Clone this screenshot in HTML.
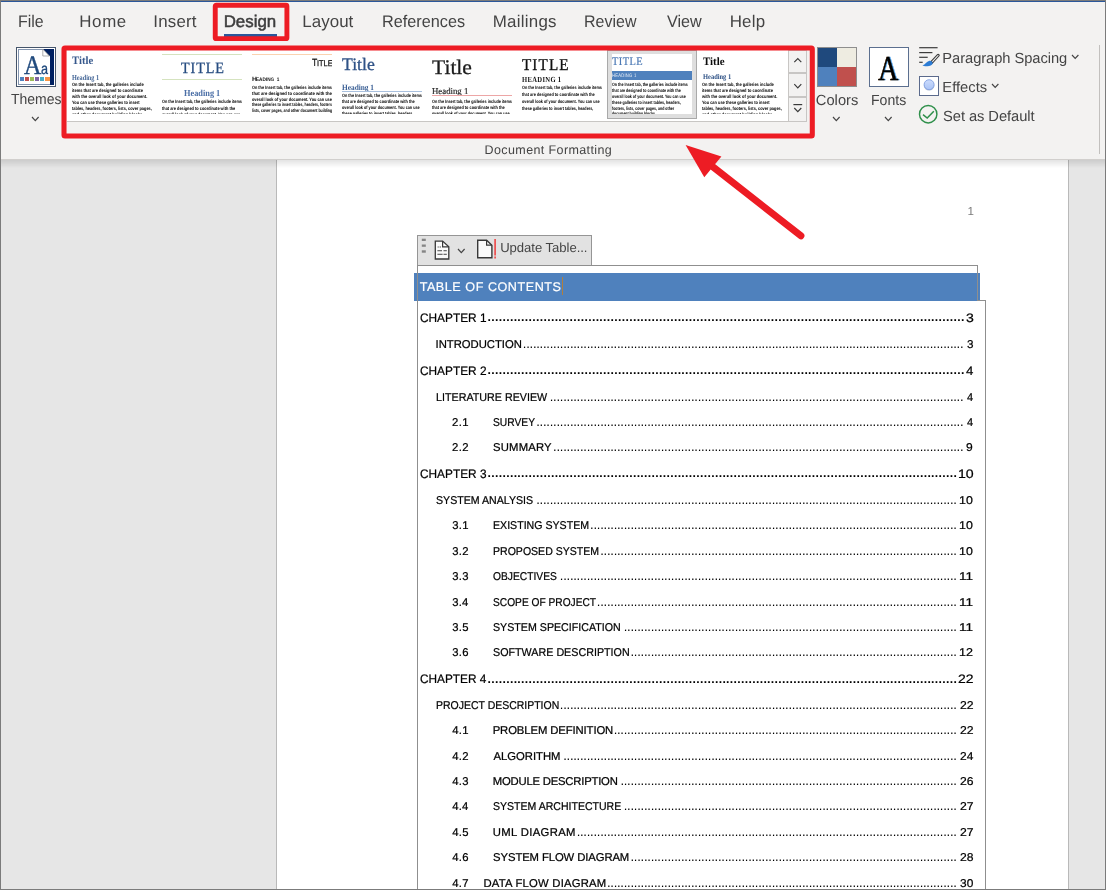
<!DOCTYPE html>
<html><head><meta charset="utf-8"><title>Word - Design tab</title>
<style>
html,body{margin:0;padding:0}
body{width:1106px;height:890px;overflow:hidden;background:#e6e6e6;position:relative;font-family:"Liberation Sans",sans-serif}
.a{position:absolute}
.t{position:absolute;white-space:nowrap;transform-origin:0 50%;text-rendering:geometricPrecision}
.s{font-family:'Liberation Sans',sans-serif}
.ribbon{left:0;top:0;width:1106px;height:159px;background:#f3f2f1}
.redbox{border:5px solid #ed1c24;border-radius:4px;box-sizing:border-box}
.gal{left:67px;top:50px;width:721px;height:71px;background:#fff;overflow:hidden}
.thumb{position:absolute;top:0;height:64px;overflow:hidden}
.sb{position:absolute;left:788px;width:19px;box-sizing:border-box;border:1px solid #c8c6c4;background:#f3f2f1}
svg{position:absolute;overflow:visible}
</style></head><body><div id="root" style="position:absolute;left:0;top:0;width:1106px;height:890px;overflow:hidden;will-change:transform">
<div class="a ribbon"></div><div class="a" style="left:0;top:159px;width:1106px;height:1px;background:#d1cfcd"></div><div class="a" style="left:276px;top:160px;width:793px;height:730px;background:#fff;border-left:1px solid #b9b9b9;border-right:1px solid #b9b9b9;box-sizing:border-box"></div><div class="a" style="left:0;top:160px;width:1106px;height:8px;background:linear-gradient(rgba(0,0,0,.11),rgba(0,0,0,0))"></div><span class="t" style="left:18.35px;top:13.60px;font:400 16.9px/16.9px 'Liberation Sans',sans-serif;color:#444;transform:scaleX(0.9435);">File</span><span class="t" style="left:79.28px;top:13.60px;font:400 16.9px/16.9px 'Liberation Sans',sans-serif;color:#444;letter-spacing:0.642px;">Home</span><span class="t" style="left:153.28px;top:13.60px;font:400 16.9px/16.9px 'Liberation Sans',sans-serif;color:#444;letter-spacing:0.199px;">Insert</span><span class="t" style="left:223.68px;top:13.80px;font:400 16.9px/16.9px 'Liberation Sans',sans-serif;color:#3d3d3d;letter-spacing:-0.007px;-webkit-text-stroke:.5px #3d3d3d;">Design</span><span class="t" style="left:302.28px;top:13.60px;font:400 16.9px/16.9px 'Liberation Sans',sans-serif;color:#444;letter-spacing:0.064px;">Layout</span><span class="t" style="left:382.33px;top:13.60px;font:400 16.9px/16.9px 'Liberation Sans',sans-serif;color:#444;transform:scaleX(0.9625);">References</span><span class="t" style="left:492.68px;top:13.60px;font:400 16.9px/16.9px 'Liberation Sans',sans-serif;color:#444;letter-spacing:0.266px;">Mailings</span><span class="t" style="left:584.35px;top:13.60px;font:400 16.9px/16.9px 'Liberation Sans',sans-serif;color:#444;transform:scaleX(0.9466);">Review</span><span class="t" style="left:667.00px;top:13.60px;font:400 16.9px/16.9px 'Liberation Sans',sans-serif;color:#444;transform:scaleX(0.9581);">View</span><span class="t" style="left:729.68px;top:13.60px;font:400 16.9px/16.9px 'Liberation Sans',sans-serif;color:#444;letter-spacing:0.216px;">Help</span><div class="a" style="left:224px;top:34px;width:53px;height:3px;background:#2b579a"></div><svg style="left:0;top:0" width="300" height="50"><rect x="215.25" y="5.25" width="71.65" height="33.4" rx="1" fill="none" stroke="#ed1c24" stroke-width="4.9"/></svg><div class="a" style="left:16px;top:47px;width:40px;height:40px;box-sizing:border-box;border:1px solid #44546a;background:#fff"></div>
<div class="a" style="left:18px;top:49px;width:36px;height:36px;box-sizing:border-box;border:1px solid #8496b0;background:#fff"></div>
<div class="a" style="left:43px;top:49px;width:11px;height:7px;background:#002060"></div>
<div class="a" style="left:49.5px;top:49px;width:4.5px;height:35.5px;background:#002060"></div>
<svg style="left:42px;top:48px" width="9" height="9"><path d="M0.8 1 L0.8 8 L7.5 8 Z" fill="#fff" stroke="#8c8c8c" stroke-width="0.7"/></svg>
<span class="t" style="left:24.00px;top:51.70px;font:400 27px/27px 'Liberation Serif',serif;color:#1f497d;transform:scaleX(0.8915);-webkit-text-stroke:.4px #1f497d;">A</span><span class="t" style="left:41.21px;top:61.70px;font:400 15.6px/15.6px 'Liberation Sans',sans-serif;color:#1f497d;transform:scaleX(0.8084);-webkit-text-stroke:.3px #1f497d;">a</span><div class="a" style="left:20.1px;top:77.3px;width:3.8px;height:3.5px;background:#4f81bd"></div><div class="a" style="left:25.1px;top:77.3px;width:3.8px;height:3.5px;background:#c0504d"></div><div class="a" style="left:30.1px;top:77.3px;width:3.8px;height:3.5px;background:#9bbb59"></div><div class="a" style="left:35.1px;top:77.3px;width:3.8px;height:3.5px;background:#8064a2"></div><div class="a" style="left:40.1px;top:77.3px;width:3.8px;height:3.5px;background:#4bacc6"></div><div class="a" style="left:45.1px;top:77.3px;width:4.5px;height:3.5px;background:#f79646"></div><div class="a" style="left:49.5px;top:57px;width:4.5px;height:27.5px;background:#002060"></div><span class="t" style="left:10.68px;top:93.30px;font:400 14.7px/14.7px 'Liberation Sans',sans-serif;color:#444;transform:scaleX(0.9502);">Themes</span><svg style="left:31.35px;top:115.70px" width="8.6" height="5.6"><path d="M1 1 L4.30 4.60 L7.6 1" fill="none" stroke="#444" stroke-width="1.15"/></svg><div class="a gal" id="gal"><div class="a" style="left:540.25px;top:-0.5px;width:89.7px;height:69.5px;box-sizing:border-box;border:1px solid #a9a9a9;background:#dedede"></div><div class="a" style="left:5.10px;top:3.75px;width:80.4px;height:60.5px;overflow:hidden;background:#fff"><span class="t" style="left:0.01px;top:2.65px;font:700 11.3px/11.3px 'Liberation Serif',serif;color:#36588c;transform:scaleX(0.9443);">Title</span><span class="t" style="left:0.07px;top:20.25px;font:700 7.6px/7.6px 'Liberation Serif',serif;color:#456798;transform:scaleX(0.8180);">Heading 1</span><span class="t" style="left:0.02px;top:28.85px;font:700 4.7px/4.7px 'Liberation Sans',sans-serif;color:#000;transform:scaleX(0.8442);">On the Insert tab, the galleries include</span><span class="t" style="left:-0.11px;top:34.85px;font:700 4.7px/4.7px 'Liberation Sans',sans-serif;color:#000;transform:scaleX(0.8508);">items that are designed to coordinate</span><span class="t" style="left:0.19px;top:40.85px;font:700 4.7px/4.7px 'Liberation Sans',sans-serif;color:#000;transform:scaleX(0.8627);">with the overall look of your document.</span><span class="t" style="left:0.11px;top:47.00px;font:700 4.7px/4.7px 'Liberation Sans',sans-serif;color:#000;transform:scaleX(0.8356);">You can use these galleries to insert</span><span class="t" style="left:0.11px;top:53.05px;font:700 4.7px/4.7px 'Liberation Sans',sans-serif;color:#000;transform:scaleX(0.8327);">tables, headers, footers, lists, cover pages,</span><span class="t" style="left:0.06px;top:59.05px;font:700 4.7px/4.7px 'Liberation Sans',sans-serif;color:#000;transform:scaleX(0.8705);">and other document building blocks.</span></div><div class="a" style="left:95.10px;top:3.75px;width:80.4px;height:60.5px;overflow:hidden;background:#fff"><div class="a" style="left:0.00px;top:0.35px;width:80.2px;height:1px;background:#d5e3bf"></div><div class="a" style="left:0.00px;top:25.35px;width:80.2px;height:1px;background:#d5e3bf"></div><span class="t" style="left:18.58px;top:6.75px;font:400 15.8px/15.8px 'Liberation Serif',serif;color:#264c80;transform:scaleX(0.8964);letter-spacing:1px;-webkit-text-stroke:.3px #264c80;">TITLE</span><span class="t" style="left:21.76px;top:35.15px;font:700 9.1px/9.1px 'Liberation Serif',serif;color:#4a6ea6;transform:scaleX(0.9145);">Heading 1</span><span class="t" style="left:0.03px;top:46.65px;font:700 4.7px/4.7px 'Liberation Sans',sans-serif;color:#000;transform:scaleX(0.8124);">On the Insert tab, the galleries include items</span><span class="t" style="left:0.11px;top:53.15px;font:700 4.7px/4.7px 'Liberation Sans',sans-serif;color:#000;transform:scaleX(0.8241);">that are designed to coordinate with the</span><span class="t" style="left:0.03px;top:59.45px;font:700 4.7px/4.7px 'Liberation Sans',sans-serif;color:#000;transform:scaleX(0.8084);">overall look of your document. You can use</span></div><div class="a" style="left:185.10px;top:3.75px;width:80.4px;height:60.5px;overflow:hidden;background:#fff"><div class="a" style="left:0.00px;top:0.35px;width:80.2px;height:1px;background:#fad3b0"></div><span class="t" style="left:59.98px;top:4.75px;font:400 10.4px/10.4px 'Liberation Sans',sans-serif;color:#111;transform:scaleX(0.8319);-webkit-text-stroke:.2px #111;">T</span><span class="t" style="left:64.73px;top:5.75px;font:400 8.2px/8.2px 'Liberation Sans',sans-serif;color:#111;transform:scaleX(0.8986);-webkit-text-stroke:.25px #111;">ITLE</span><span class="t" style="left:-0.23px;top:23.25px;font:700 6.3px/6.3px 'Liberation Sans',sans-serif;color:#111;transform:scaleX(1.0667);">H</span><span class="t" style="left:4.12px;top:24.25px;font:700 5px/5px 'Liberation Sans',sans-serif;color:#111;transform:scaleX(0.9319);white-space:pre;">EADING  1</span><span class="t" style="left:0.03px;top:32.00px;font:700 4.7px/4.7px 'Liberation Sans',sans-serif;color:#000;transform:scaleX(0.8124);">On the Insert tab, the galleries include items</span><span class="t" style="left:0.11px;top:37.85px;font:700 4.7px/4.7px 'Liberation Sans',sans-serif;color:#000;transform:scaleX(0.8995);">that are designed to coordinate with the</span><span class="t" style="left:0.03px;top:43.75px;font:700 4.7px/4.7px 'Liberation Sans',sans-serif;color:#000;transform:scaleX(0.8259);">overall look of your document. You can use</span><span class="t" style="left:0.11px;top:49.55px;font:700 4.7px/4.7px 'Liberation Sans',sans-serif;color:#000;transform:scaleX(0.7517);">these galleries to insert tables, headers, footers</span><span class="t" style="left:-0.08px;top:55.65px;font:700 4.7px/4.7px 'Liberation Sans',sans-serif;color:#000;transform:scaleX(0.7525);">lists, cover pages, and other document building</span></div><div class="a" style="left:275.10px;top:3.75px;width:80.4px;height:60.5px;overflow:hidden;background:#fff"><span class="t" style="left:0.12px;top:2.25px;font:400 17.6px/17.6px 'Liberation Serif',serif;color:#2f5286;transform:scaleX(1.0046);-webkit-text-stroke:.3px #2f5286;">Title</span><span class="t" style="left:0.31px;top:29.85px;font:700 8.1px/8.1px 'Liberation Serif',serif;color:#3a5f95;transform:scaleX(0.9072);">Heading 1</span><div class="a" style="left:0.00px;top:37.25px;width:80.2px;height:1px;background:#a9c0de"></div><span class="t" style="left:0.03px;top:39.75px;font:700 4.7px/4.7px 'Liberation Sans',sans-serif;color:#000;transform:scaleX(0.8124);">On the Insert tab, the galleries include items</span><span class="t" style="left:0.11px;top:45.75px;font:700 4.7px/4.7px 'Liberation Sans',sans-serif;color:#000;transform:scaleX(0.8185);">that are designed to coordinate with the</span><span class="t" style="left:0.03px;top:51.75px;font:700 4.7px/4.7px 'Liberation Sans',sans-serif;color:#000;transform:scaleX(0.8032);">overall look of your document. You can use</span><span class="t" style="left:0.11px;top:57.75px;font:700 4.7px/4.7px 'Liberation Sans',sans-serif;color:#000;transform:scaleX(0.8007);">these galleries to insert tables, headers,</span></div><div class="a" style="left:365.10px;top:3.75px;width:80.4px;height:60.5px;overflow:hidden;background:#fff"><span class="t" style="left:0.06px;top:3.85px;font:400 20.8px/20.8px 'Liberation Serif',serif;color:#1c1c1c;transform:scaleX(1.0355);-webkit-text-stroke:.3px #1c1c1c;">Title</span><span class="t" style="left:0.16px;top:32.85px;font:400 9px/9px 'Liberation Serif',serif;color:#2a2a2a;transform:scaleX(0.9756);-webkit-text-stroke:.2px #2a2a2a;">Heading 1</span><div class="a" style="left:0.00px;top:41.05px;width:80.2px;height:1px;background:#eda6a6"></div><span class="t" style="left:0.03px;top:46.00px;font:700 4.7px/4.7px 'Liberation Sans',sans-serif;color:#000;transform:scaleX(0.8124);">On the Insert tab, the galleries include items</span><span class="t" style="left:0.11px;top:52.25px;font:700 4.7px/4.7px 'Liberation Sans',sans-serif;color:#000;transform:scaleX(0.8185);">that are designed to coordinate with the</span><span class="t" style="left:0.03px;top:58.65px;font:700 4.7px/4.7px 'Liberation Sans',sans-serif;color:#000;transform:scaleX(0.8032);">overall look of your document. You can use</span></div><div class="a" style="left:455.10px;top:3.75px;width:80.4px;height:60.5px;overflow:hidden;background:#fff"><span class="t" style="left:0.16px;top:2.85px;font:400 16.6px/16.6px 'Liberation Serif',serif;color:#111;transform:scaleX(0.9152);letter-spacing:1.2px;-webkit-text-stroke:.3px #111;">TITLE</span><span class="t" style="left:0.32px;top:22.15px;font:700 7.8px/7.8px 'Liberation Serif',serif;color:#111;transform:scaleX(0.8457);letter-spacing:.4px;">HEADING 1</span><span class="t" style="left:0.03px;top:32.00px;font:700 4.7px/4.7px 'Liberation Sans',sans-serif;color:#000;transform:scaleX(0.8124);">On the Insert tab, the galleries include items</span><span class="t" style="left:0.11px;top:38.85px;font:700 4.7px/4.7px 'Liberation Sans',sans-serif;color:#000;transform:scaleX(0.8185);">that are designed to coordinate with the</span><span class="t" style="left:0.03px;top:45.75px;font:700 4.7px/4.7px 'Liberation Sans',sans-serif;color:#000;transform:scaleX(0.8032);">overall look of your document. You can use</span><span class="t" style="left:0.11px;top:52.85px;font:700 4.7px/4.7px 'Liberation Sans',sans-serif;color:#000;transform:scaleX(0.8007);">these galleries to insert tables, headers,</span></div><div class="a" style="left:545.10px;top:3.75px;width:80.4px;height:60.5px;overflow:hidden;background:#fff"><span class="t" style="left:0.22px;top:2.85px;font:400 11.5px/11.5px 'Liberation Serif',serif;color:#4a78b4;transform:scaleX(0.9035);letter-spacing:.5px;-webkit-text-stroke:.2px #4a78b4;">TITLE</span><div class="a" style="left:0.00px;top:17.15px;width:80.2px;height:9px;background:#4f81bd"></div><span class="t" style="left:0.17px;top:20.05px;font:400 5px/5px 'Liberation Sans',sans-serif;color:#e8eef7;transform:scaleX(0.8235);letter-spacing:.3px;">HEADING 1</span><span class="t" style="left:0.03px;top:29.50px;font:700 4.7px/4.7px 'Liberation Sans',sans-serif;color:#000;transform:scaleX(0.7697);">On the Insert tab, the galleries include items</span><span class="t" style="left:0.11px;top:35.15px;font:700 4.7px/4.7px 'Liberation Sans',sans-serif;color:#000;transform:scaleX(0.7735);">that are designed to coordinate with the</span><span class="t" style="left:0.04px;top:41.00px;font:700 4.7px/4.7px 'Liberation Sans',sans-serif;color:#000;transform:scaleX(0.7619);">overall look of your document. You can use</span><span class="t" style="left:0.11px;top:46.85px;font:700 4.7px/4.7px 'Liberation Sans',sans-serif;color:#000;transform:scaleX(0.7726);">these galleries to insert tables, headers,</span><span class="t" style="left:0.11px;top:52.75px;font:700 4.7px/4.7px 'Liberation Sans',sans-serif;color:#000;transform:scaleX(0.7610);">footers, lists, cover pages, and other</span><span class="t" style="left:0.04px;top:58.65px;font:700 4.7px/4.7px 'Liberation Sans',sans-serif;color:#000;transform:scaleX(0.7405);">document building blocks.</span></div><div class="a" style="left:635.10px;top:3.75px;width:80.4px;height:60.5px;overflow:hidden;background:#fff"><span class="t" style="left:0.50px;top:3.15px;font:700 11.3px/11.3px 'Liberation Serif',serif;color:#0c0c0c;transform:scaleX(0.9670);">Title</span><span class="t" style="left:0.56px;top:19.25px;font:700 7.4px/7.4px 'Liberation Serif',serif;color:#2f5286;transform:scaleX(0.8750);">Heading 1</span><span class="t" style="left:0.02px;top:28.85px;font:700 4.7px/4.7px 'Liberation Sans',sans-serif;color:#000;transform:scaleX(0.8453);">On the Insert tab, the galleries include</span><span class="t" style="left:-0.11px;top:34.85px;font:700 4.7px/4.7px 'Liberation Sans',sans-serif;color:#000;transform:scaleX(0.8508);">items that are designed to coordinate</span><span class="t" style="left:0.19px;top:40.85px;font:700 4.7px/4.7px 'Liberation Sans',sans-serif;color:#000;transform:scaleX(0.8627);">with the overall look of your document.</span><span class="t" style="left:0.11px;top:47.00px;font:700 4.7px/4.7px 'Liberation Sans',sans-serif;color:#000;transform:scaleX(0.8356);">You can use these galleries to insert</span><span class="t" style="left:0.11px;top:53.05px;font:700 4.7px/4.7px 'Liberation Sans',sans-serif;color:#000;transform:scaleX(0.8327);">tables, headers, footers, lists, cover pages,</span><span class="t" style="left:0.06px;top:59.05px;font:700 4.7px/4.7px 'Liberation Sans',sans-serif;color:#000;transform:scaleX(0.8705);">and other document building blocks.</span></div></div><div class="a" style="left:67px;top:121px;width:740px;height:1px;background:#c8c6c4"></div><div class="sb" style="top:49.5px;height:23.4px"></div><div class="sb" style="top:72.9px;height:23.9px"></div><div class="sb" style="top:96.8px;height:25.2px"></div><svg style="left:788px;top:50px" width="19" height="72"><g fill="none" stroke="#3a3a3a" stroke-width="1.15"><path d="M6.3 12.2 L9.8 8.5 L13.3 12.2"/><path d="M6.3 34.2 L9.8 37.9 L13.3 34.2"/><path d="M5.4 54.6 L14.2 54.6" stroke-width="1.2"/><path d="M6.3 58 L9.8 61.7 L13.3 58"/></g></svg><svg style="left:0;top:0" width="830" height="145"><rect x="64.0" y="47.9" width="748.3" height="88" rx="1" fill="none" stroke="#ed1c24" stroke-width="5.05"/></svg><div class="a" style="left:817px;top:47px;width:40px;height:40px;box-sizing:border-box;border:1px solid #8e8e8e;background:#1f497d">
<div class="a" style="left:19px;top:0;width:19px;height:19px;background:#eeece1"></div>
<div class="a" style="left:0;top:19px;width:19px;height:19px;background:#4f81bd"></div>
<div class="a" style="left:19px;top:19px;width:19px;height:19px;background:#c0504d"></div></div>
<div class="a" style="left:869px;top:47px;width:40px;height:40px;box-sizing:border-box;border:1px solid #5b6f8f;background:#fff"></div><span class="t" style="left:877.90px;top:50.90px;font:400 35px/35px 'Liberation Serif',serif;color:#f2a050;transform:scaleX(0.8070);-webkit-text-stroke:.35px #f2a050;">A</span><span class="t" style="left:878.70px;top:50.90px;font:400 35px/35px 'Liberation Serif',serif;color:#58a8f0;transform:scaleX(0.8070);-webkit-text-stroke:.35px #58a8f0;">A</span><span class="t" style="left:878.30px;top:50.90px;font:400 35px/35px 'Liberation Serif',serif;color:#000;transform:scaleX(0.8070);-webkit-text-stroke:.4px #000;">A</span><span class="t" style="left:815.81px;top:94.00px;font:400 14.7px/14.7px 'Liberation Sans',sans-serif;color:#444;letter-spacing:0.014px;">Colors</span><span class="t" style="left:870.80px;top:94.00px;font:400 14.7px/14.7px 'Liberation Sans',sans-serif;color:#444;transform:scaleX(0.9586);">Fonts</span><svg style="left:832.20px;top:115.70px" width="8.6" height="5.6"><path d="M1 1 L4.30 4.60 L7.6 1" fill="none" stroke="#444" stroke-width="1.15"/></svg><svg style="left:884.20px;top:115.70px" width="8.6" height="5.6"><path d="M1 1 L4.30 4.60 L7.6 1" fill="none" stroke="#444" stroke-width="1.15"/></svg><svg style="left:0;top:0" width="1106" height="130"><g fill="none" stroke="#3b3b3b" stroke-width="1.2">
<path d="M919.2 47.7 H937.6"/><path d="M919.2 52.6 H932.4"/><path d="M919.2 57.3 H927.7"/><path d="M919.2 62.3 H922.7"/></g>
<path d="M938.2 55.3 L931.6 62.4" stroke="#3b3b3b" stroke-width="3.1" stroke-linecap="round" fill="none"/>
<path d="M938.0 55.5 L932.6 61.3" stroke="#f6f6f6" stroke-width="1.1" stroke-linecap="round" fill="none"/>
<path d="M922.4 65.4 C925.4 64.6 926.4 61.4 929.4 60.7 C931.6 60.6 933.0 62.0 932.6 63.8 C931.6 66.2 927.4 67.0 922.4 65.4Z" fill="#2b7bd4"/></svg><span class="t" style="left:942.35px;top:51.50px;font:400 14.7px/14.7px 'Liberation Sans',sans-serif;color:#444;letter-spacing:-0.055px;">Paragraph Spacing</span><svg style="left:1071.10px;top:53.70px" width="8.4" height="5.4"><path d="M1 1 L4.20 4.40 L7.4 1" fill="none" stroke="#444" stroke-width="1.15"/></svg><div class="a" style="left:919px;top:76px;width:20px;height:20px;box-sizing:border-box;border:1px solid #5b6a8c;background:#fff"></div>
<svg style="left:919px;top:76px" width="20" height="20"><defs><linearGradient id="eg" x1="0" y1="0" x2="0" y2="1"><stop offset="0" stop-color="#cddcfc"/><stop offset="1" stop-color="#a9c3f6"/></linearGradient></defs>
<ellipse cx="10.1" cy="9.6" rx="5.2" ry="5.0" fill="#6f82ad" opacity=".5"/><circle cx="10.1" cy="8.7" r="5.0" fill="url(#eg)" stroke="#7a9ae0" stroke-width=".8"/></svg><span class="t" style="left:942.35px;top:80.50px;font:400 14.7px/14.7px 'Liberation Sans',sans-serif;color:#444;letter-spacing:0.023px;">Effects</span><svg style="left:991.40px;top:82.50px" width="8.4" height="5.4"><path d="M1 1 L4.20 4.40 L7.4 1" fill="none" stroke="#444" stroke-width="1.15"/></svg><svg style="left:918px;top:104px" width="22" height="22"><circle cx="10.2" cy="10.2" r="8.7" fill="none" stroke="#2e8f4a" stroke-width="1.45"/><path d="M5 10.6 L9.2 14 L15.8 7.3" fill="none" stroke="#2e8f4a" stroke-width="1.5"/></svg><span class="t" style="left:943.04px;top:109.70px;font:400 14.7px/14.7px 'Liberation Sans',sans-serif;color:#444;letter-spacing:-0.056px;">Set as Default</span><div class="a" style="left:1099px;top:45px;width:1px;height:109px;background:#c2c0be"></div><span class="t" style="left:484.60px;top:144.00px;font:400 12.5px/12.5px 'Liberation Sans',sans-serif;color:#444;letter-spacing:0.390px;">Document Formatting</span><span class="t" style="left:967.45px;top:206.30px;font:400 11.6px/11.6px 'Liberation Sans',sans-serif;color:#7a7a7a;">1</span><div class="a" style="left:417px;top:235px;width:175.4px;height:31px;box-sizing:border-box;border:1px solid #959595;background:#e2e2e2"></div><svg style="left:0;top:0" width="600" height="270"><g fill="#858585"><rect x="421.8" y="238.7" width="4" height="2.3"/><rect x="421.8" y="244.5" width="4" height="2.3"/><rect x="421.8" y="250.3" width="4" height="2.4"/></g></svg><svg style="left:0;top:0" width="600" height="270"><path d="M435.3 241.1 H442.6 L448.8 246.8 V259 H435.3 Z" fill="#fafafa" stroke="#383838" stroke-width="1.3"/><path d="M442.6 241.1 V246.8 H448.8" fill="none" stroke="#383838" stroke-width="1.2"/>
<g stroke="#555" stroke-width="1.1"><path d="M437.6 247 H438.8"/><path d="M439.6 247 H441"/><path d="M437.4 250.7 H442"/><path d="M443.5 250.7 H446.8"/><path d="M437.4 254.3 H442.6"/><path d="M443.5 254.3 H446.8"/></g></svg><svg style="left:457.10px;top:247.70px" width="8.6" height="5.6"><path d="M1 1 L4.30 4.60 L7.6 1" fill="none" stroke="#444" stroke-width="1.2"/></svg><svg style="left:0;top:0" width="600" height="270"><path d="M477.7 240.2 H486.6 L491.9 245.2 V257.8 H477.7 Z" fill="#fafafa" stroke="#383838" stroke-width="1.4"/><path d="M486.6 240.2 V245.2 H491.9" fill="none" stroke="#383838" stroke-width="1.2"/>
<path d="M495.1 238.9 V255.4" stroke="#ee3a3a" stroke-width="1.5"/><path d="M495.1 256.4 V258.5" stroke="#ee3a3a" stroke-width="1.5"/></svg><span class="t" style="left:500.18px;top:241.40px;font:400 13.1px/13.1px 'Liberation Sans',sans-serif;color:#444;letter-spacing:-0.037px;">Update Table...</span><div class="a" style="left:414px;top:273px;width:566px;height:27.6px;background:#4f81bd"></div><div class="a" style="left:417px;top:265px;width:561px;height:36px;box-sizing:border-box;border:1px solid #8f8f8f;border-bottom:none"></div><div class="a" style="left:417px;top:300px;width:569px;height:600px;box-sizing:border-box;border-left:1px solid #8f8f8f;border-right:1px solid #8f8f8f"></div><div class="a" style="left:977px;top:300px;width:9px;height:1px;background:#8f8f8f"></div><span class="t" style="left:419.65px;top:280.80px;font:400 12.6px/12.6px 'Liberation Sans',sans-serif;color:#fff;letter-spacing:0.533px;-webkit-text-stroke:.2px #fff;">TABLE OF CONTENTS</span><div class="a" style="left:561.9px;top:277px;width:1.25px;height:17.8px;background:#b07f3e"></div><span class="t" style="left:420.02px;top:311.60px;font:400 12.3px/12.3px 'Liberation Sans',sans-serif;color:#000;transform:scaleX(0.9640);-webkit-text-stroke:.22px #000;">CHAPTER 1</span><span class="t" style="left:965.58px;top:311.60px;font:400 12.3px/12.3px 'Liberation Sans',sans-serif;color:#000;transform:scaleX(1.1453);-webkit-text-stroke:.22px #000;">3</span><span class="t s" style="left:487.56px;top:311.15px;font-size:12.3px;line-height:12.3px;font-weight:700;color:#000;letter-spacing:0.311px">................................................................................................................................</span><span class="t" style="left:435.60px;top:340.00px;font:400 11.3px/11.3px 'Liberation Sans',sans-serif;color:#000;letter-spacing:-0.029px;-webkit-text-stroke:.22px #000;">INTRODUCTION</span><span class="t" style="left:966.59px;top:340.00px;font:400 11.3px/11.3px 'Liberation Sans',sans-serif;color:#000;transform:scaleX(1.0370);-webkit-text-stroke:.22px #000;">3</span><span class="t s" style="left:522.80px;top:336.95px;font-size:13px;line-height:13px;font-weight:400;color:#000;letter-spacing:-0.249px">...................................................................................................................................</span><span class="t" style="left:420.02px;top:364.60px;font:400 12.3px/12.3px 'Liberation Sans',sans-serif;color:#000;transform:scaleX(0.9640);-webkit-text-stroke:.22px #000;">CHAPTER 2</span><span class="t" style="left:965.83px;top:364.60px;font:400 12.3px/12.3px 'Liberation Sans',sans-serif;color:#000;transform:scaleX(1.0720);-webkit-text-stroke:.22px #000;">4</span><span class="t s" style="left:487.56px;top:364.15px;font-size:12.3px;line-height:12.3px;font-weight:700;color:#000;letter-spacing:0.311px">................................................................................................................................</span><span class="t" style="left:435.75px;top:392.60px;font:400 11.3px/11.3px 'Liberation Sans',sans-serif;color:#000;transform:scaleX(0.9494);-webkit-text-stroke:.22px #000;">LITERATURE REVIEW</span><span class="t" style="left:966.76px;top:392.60px;font:400 11.3px/11.3px 'Liberation Sans',sans-serif;color:#000;transform:scaleX(0.9739);-webkit-text-stroke:.22px #000;">4</span><span class="t s" style="left:549.72px;top:389.55px;font-size:13px;line-height:13px;font-weight:400;color:#000;letter-spacing:-0.249px">...........................................................................................................................</span><span class="t" style="left:452.05px;top:418.00px;font:400 11.3px/11.3px 'Liberation Sans',sans-serif;color:#000;letter-spacing:0.388px;-webkit-text-stroke:.22px #000;">2.1</span><span class="t" style="left:493.15px;top:418.00px;font:400 11.3px/11.3px 'Liberation Sans',sans-serif;color:#000;transform:scaleX(0.9093);-webkit-text-stroke:.22px #000;">SURVEY</span><span class="t" style="left:966.76px;top:418.00px;font:400 11.3px/11.3px 'Liberation Sans',sans-serif;color:#000;transform:scaleX(0.9739);-webkit-text-stroke:.22px #000;">4</span><span class="t s" style="left:536.26px;top:414.95px;font-size:13px;line-height:13px;font-weight:400;color:#000;letter-spacing:-0.249px">...............................................................................................................................</span><span class="t" style="left:452.05px;top:443.00px;font:400 11.3px/11.3px 'Liberation Sans',sans-serif;color:#000;letter-spacing:0.388px;-webkit-text-stroke:.22px #000;">2.2</span><span class="t" style="left:493.10px;top:443.00px;font:400 11.3px/11.3px 'Liberation Sans',sans-serif;color:#000;letter-spacing:0.164px;-webkit-text-stroke:.22px #000;">SUMMARY</span><span class="t" style="left:966.47px;top:443.00px;font:400 11.3px/11.3px 'Liberation Sans',sans-serif;color:#000;transform:scaleX(1.0667);-webkit-text-stroke:.22px #000;">9</span><span class="t s" style="left:553.08px;top:439.95px;font-size:13px;line-height:13px;font-weight:400;color:#000;letter-spacing:-0.249px">..........................................................................................................................</span><span class="t" style="left:420.02px;top:467.60px;font:400 12.3px/12.3px 'Liberation Sans',sans-serif;color:#000;transform:scaleX(0.9633);-webkit-text-stroke:.22px #000;">CHAPTER 3</span><span class="t" style="left:957.56px;top:467.60px;font:400 12.3px/12.3px 'Liberation Sans',sans-serif;color:#000;transform:scaleX(1.1507);-webkit-text-stroke:.22px #000;">10</span><span class="t s" style="left:487.56px;top:467.15px;font-size:12.3px;line-height:12.3px;font-weight:700;color:#000;letter-spacing:0.311px">..............................................................................................................................</span><span class="t" style="left:436.13px;top:495.60px;font:400 11.3px/11.3px 'Liberation Sans',sans-serif;color:#000;transform:scaleX(0.9394);-webkit-text-stroke:.22px #000;">SYSTEM ANALYSIS</span><span class="t" style="left:959.27px;top:495.60px;font:400 11.3px/11.3px 'Liberation Sans',sans-serif;color:#000;transform:scaleX(1.0989);-webkit-text-stroke:.22px #000;">10</span><span class="t s" style="left:536.26px;top:492.55px;font-size:13px;line-height:13px;font-weight:400;color:#000;letter-spacing:-0.249px">.............................................................................................................................</span><span class="t" style="left:452.20px;top:521.00px;font:400 11.3px/11.3px 'Liberation Sans',sans-serif;color:#000;letter-spacing:0.313px;-webkit-text-stroke:.22px #000;">3.1</span><span class="t" style="left:492.75px;top:521.00px;font:400 11.3px/11.3px 'Liberation Sans',sans-serif;color:#000;transform:scaleX(0.9390);-webkit-text-stroke:.22px #000;">EXISTING SYSTEM</span><span class="t" style="left:959.27px;top:521.00px;font:400 11.3px/11.3px 'Liberation Sans',sans-serif;color:#000;transform:scaleX(1.0989);-webkit-text-stroke:.22px #000;">10</span><span class="t s" style="left:590.10px;top:517.95px;font-size:13px;line-height:13px;font-weight:400;color:#000;letter-spacing:-0.249px">.............................................................................................................</span><span class="t" style="left:452.20px;top:546.60px;font:400 11.3px/11.3px 'Liberation Sans',sans-serif;color:#000;letter-spacing:0.313px;-webkit-text-stroke:.22px #000;">3.2</span><span class="t" style="left:492.76px;top:546.60px;font:400 11.3px/11.3px 'Liberation Sans',sans-serif;color:#000;transform:scaleX(0.9335);-webkit-text-stroke:.22px #000;">PROPOSED SYSTEM</span><span class="t" style="left:959.27px;top:546.60px;font:400 11.3px/11.3px 'Liberation Sans',sans-serif;color:#000;transform:scaleX(1.0989);-webkit-text-stroke:.22px #000;">10</span><span class="t s" style="left:600.19px;top:543.55px;font-size:13px;line-height:13px;font-weight:400;color:#000;letter-spacing:-0.249px">..........................................................................................................</span><span class="t" style="left:452.20px;top:572.00px;font:400 11.3px/11.3px 'Liberation Sans',sans-serif;color:#000;letter-spacing:0.288px;-webkit-text-stroke:.22px #000;">3.3</span><span class="t" style="left:493.15px;top:572.00px;font:400 11.3px/11.3px 'Liberation Sans',sans-serif;color:#000;transform:scaleX(0.9086);-webkit-text-stroke:.22px #000;">OBJECTIVES</span><span class="t" style="left:959.18px;top:572.00px;font:400 11.3px/11.3px 'Liberation Sans',sans-serif;color:#000;transform:scaleX(1.1985);-webkit-text-stroke:.22px #000;">11</span><span class="t s" style="left:559.81px;top:568.95px;font-size:13px;line-height:13px;font-weight:400;color:#000;letter-spacing:-0.249px">......................................................................................................................</span><span class="t" style="left:452.20px;top:597.60px;font:400 11.3px/11.3px 'Liberation Sans',sans-serif;color:#000;letter-spacing:0.188px;-webkit-text-stroke:.22px #000;">3.4</span><span class="t" style="left:493.15px;top:597.60px;font:400 11.3px/11.3px 'Liberation Sans',sans-serif;color:#000;transform:scaleX(0.9021);-webkit-text-stroke:.22px #000;">SCOPE OF PROJECT</span><span class="t" style="left:959.18px;top:597.60px;font:400 11.3px/11.3px 'Liberation Sans',sans-serif;color:#000;transform:scaleX(1.1985);-webkit-text-stroke:.22px #000;">11</span><span class="t s" style="left:596.83px;top:594.55px;font-size:13px;line-height:13px;font-weight:400;color:#000;letter-spacing:-0.249px">...........................................................................................................</span><span class="t" style="left:452.20px;top:623.00px;font:400 11.3px/11.3px 'Liberation Sans',sans-serif;color:#000;letter-spacing:0.263px;-webkit-text-stroke:.22px #000;">3.5</span><span class="t" style="left:493.13px;top:623.00px;font:400 11.3px/11.3px 'Liberation Sans',sans-serif;color:#000;transform:scaleX(0.9433);-webkit-text-stroke:.22px #000;">SYSTEM SPECIFICATION</span><span class="t" style="left:959.18px;top:623.00px;font:400 11.3px/11.3px 'Liberation Sans',sans-serif;color:#000;transform:scaleX(1.1985);-webkit-text-stroke:.22px #000;">11</span><span class="t s" style="left:623.75px;top:619.95px;font-size:13px;line-height:13px;font-weight:400;color:#000;letter-spacing:-0.249px">...................................................................................................</span><span class="t" style="left:452.20px;top:648.40px;font:400 11.3px/11.3px 'Liberation Sans',sans-serif;color:#000;letter-spacing:0.288px;-webkit-text-stroke:.22px #000;">3.6</span><span class="t" style="left:493.13px;top:648.40px;font:400 11.3px/11.3px 'Liberation Sans',sans-serif;color:#000;transform:scaleX(0.9497);-webkit-text-stroke:.22px #000;">SOFTWARE DESCRIPTION</span><span class="t" style="left:959.26px;top:648.40px;font:400 11.3px/11.3px 'Liberation Sans',sans-serif;color:#000;transform:scaleX(1.1087);-webkit-text-stroke:.22px #000;">12</span><span class="t s" style="left:630.48px;top:645.35px;font-size:13px;line-height:13px;font-weight:400;color:#000;letter-spacing:-0.249px">.................................................................................................</span><span class="t" style="left:420.02px;top:673.00px;font:400 12.3px/12.3px 'Liberation Sans',sans-serif;color:#000;transform:scaleX(0.9605);-webkit-text-stroke:.22px #000;">CHAPTER 4</span><span class="t" style="left:957.92px;top:673.00px;font:400 12.3px/12.3px 'Liberation Sans',sans-serif;color:#000;transform:scaleX(1.1368);-webkit-text-stroke:.22px #000;">22</span><span class="t s" style="left:487.56px;top:672.54px;font-size:12.3px;line-height:12.3px;font-weight:700;color:#000;letter-spacing:0.311px">..............................................................................................................................</span><span class="t" style="left:435.77px;top:700.60px;font:400 11.3px/11.3px 'Liberation Sans',sans-serif;color:#000;transform:scaleX(0.9277);-webkit-text-stroke:.22px #000;">PROJECT DESCRIPTION</span><span class="t" style="left:959.61px;top:700.60px;font:400 11.3px/11.3px 'Liberation Sans',sans-serif;color:#000;transform:scaleX(1.0797);-webkit-text-stroke:.22px #000;">22</span><span class="t s" style="left:559.81px;top:697.55px;font-size:13px;line-height:13px;font-weight:400;color:#000;letter-spacing:-0.249px">......................................................................................................................</span><span class="t" style="left:452.35px;top:726.00px;font:400 11.3px/11.3px 'Liberation Sans',sans-serif;color:#000;letter-spacing:0.238px;-webkit-text-stroke:.22px #000;">4.1</span><span class="t" style="left:492.70px;top:726.00px;font:400 11.3px/11.3px 'Liberation Sans',sans-serif;color:#000;letter-spacing:-0.107px;-webkit-text-stroke:.22px #000;">PROBLEM DEFINITION</span><span class="t" style="left:959.61px;top:726.00px;font:400 11.3px/11.3px 'Liberation Sans',sans-serif;color:#000;transform:scaleX(1.0797);-webkit-text-stroke:.22px #000;">22</span><span class="t s" style="left:613.65px;top:722.95px;font-size:13px;line-height:13px;font-weight:400;color:#000;letter-spacing:-0.249px">......................................................................................................</span><span class="t" style="left:452.35px;top:751.60px;font:400 11.3px/11.3px 'Liberation Sans',sans-serif;color:#000;letter-spacing:0.238px;-webkit-text-stroke:.22px #000;">4.2</span><span class="t" style="left:493.60px;top:751.60px;font:400 11.3px/11.3px 'Liberation Sans',sans-serif;color:#000;letter-spacing:-0.033px;-webkit-text-stroke:.22px #000;">ALGORITHM</span><span class="t" style="left:959.62px;top:751.60px;font:400 11.3px/11.3px 'Liberation Sans',sans-serif;color:#000;transform:scaleX(1.0567);-webkit-text-stroke:.22px #000;">24</span><span class="t s" style="left:563.18px;top:748.55px;font-size:13px;line-height:13px;font-weight:400;color:#000;letter-spacing:-0.249px">.....................................................................................................................</span><span class="t" style="left:452.35px;top:777.00px;font:400 11.3px/11.3px 'Liberation Sans',sans-serif;color:#000;letter-spacing:0.213px;-webkit-text-stroke:.22px #000;">4.3</span><span class="t" style="left:492.70px;top:777.00px;font:400 11.3px/11.3px 'Liberation Sans',sans-serif;color:#000;letter-spacing:-0.206px;-webkit-text-stroke:.22px #000;">MODULE DESCRIPTION</span><span class="t" style="left:959.61px;top:777.00px;font:400 11.3px/11.3px 'Liberation Sans',sans-serif;color:#000;transform:scaleX(1.0750);-webkit-text-stroke:.22px #000;">26</span><span class="t s" style="left:620.38px;top:773.95px;font-size:13px;line-height:13px;font-weight:400;color:#000;letter-spacing:-0.249px">....................................................................................................</span><span class="t" style="left:452.35px;top:802.00px;font:400 11.3px/11.3px 'Liberation Sans',sans-serif;color:#000;letter-spacing:0.113px;-webkit-text-stroke:.22px #000;">4.4</span><span class="t" style="left:493.13px;top:802.00px;font:400 11.3px/11.3px 'Liberation Sans',sans-serif;color:#000;transform:scaleX(0.9330);-webkit-text-stroke:.22px #000;">SYSTEM ARCHITECTURE</span><span class="t" style="left:959.61px;top:802.00px;font:400 11.3px/11.3px 'Liberation Sans',sans-serif;color:#000;transform:scaleX(1.0797);-webkit-text-stroke:.22px #000;">27</span><span class="t s" style="left:623.75px;top:798.95px;font-size:13px;line-height:13px;font-weight:400;color:#000;letter-spacing:-0.249px">...................................................................................................</span><span class="t" style="left:452.35px;top:828.00px;font:400 11.3px/11.3px 'Liberation Sans',sans-serif;color:#000;letter-spacing:0.188px;-webkit-text-stroke:.22px #000;">4.5</span><span class="t" style="left:492.75px;top:828.00px;font:400 11.3px/11.3px 'Liberation Sans',sans-serif;color:#000;letter-spacing:0.343px;-webkit-text-stroke:.22px #000;">UML DIAGRAM</span><span class="t" style="left:959.61px;top:828.00px;font:400 11.3px/11.3px 'Liberation Sans',sans-serif;color:#000;transform:scaleX(1.0797);-webkit-text-stroke:.22px #000;">27</span><span class="t s" style="left:576.64px;top:824.95px;font-size:13px;line-height:13px;font-weight:400;color:#000;letter-spacing:-0.249px">.................................................................................................................</span><span class="t" style="left:452.35px;top:853.40px;font:400 11.3px/11.3px 'Liberation Sans',sans-serif;color:#000;letter-spacing:0.213px;-webkit-text-stroke:.22px #000;">4.6</span><span class="t" style="left:493.10px;top:853.40px;font:400 11.3px/11.3px 'Liberation Sans',sans-serif;color:#000;letter-spacing:-0.106px;-webkit-text-stroke:.22px #000;">SYSTEM FLOW DIAGRAM</span><span class="t" style="left:959.61px;top:853.40px;font:400 11.3px/11.3px 'Liberation Sans',sans-serif;color:#000;transform:scaleX(1.0750);-webkit-text-stroke:.22px #000;">28</span><span class="t s" style="left:630.48px;top:850.35px;font-size:13px;line-height:13px;font-weight:400;color:#000;letter-spacing:-0.249px">.................................................................................................</span><span class="t" style="left:452.35px;top:879.00px;font:400 11.3px/11.3px 'Liberation Sans',sans-serif;color:#000;letter-spacing:0.238px;-webkit-text-stroke:.22px #000;">4.7</span><span class="t" style="left:483.50px;top:879.00px;font:400 11.3px/11.3px 'Liberation Sans',sans-serif;color:#000;letter-spacing:0.206px;-webkit-text-stroke:.22px #000;">DATA FLOW DIAGRAM</span><span class="t" style="left:959.78px;top:879.00px;font:400 11.3px/11.3px 'Liberation Sans',sans-serif;color:#000;transform:scaleX(1.0567);-webkit-text-stroke:.22px #000;">30</span><span class="t s" style="left:606.92px;top:875.95px;font-size:13px;line-height:13px;font-weight:400;color:#000;letter-spacing:-0.249px">........................................................................................................</span><svg style="left:0;top:0" width="1106" height="890"><path d="M712.8 166.8 L800.9 235.8" stroke="#ed1c24" stroke-width="7" stroke-linecap="round" fill="none"/><path d="M685.6 145.1 L721.4 156.4 L704.3 177.2 Z" fill="#ed1c24"/></svg><div class="a" style="left:0;top:0;width:1106px;height:890px;box-sizing:border-box;border:1px solid #7b7b7b;pointer-events:none"></div><div class="a" style="left:1px;top:1px;width:1104px;height:1px;background:#2b579a"></div>
</div></body></html>
